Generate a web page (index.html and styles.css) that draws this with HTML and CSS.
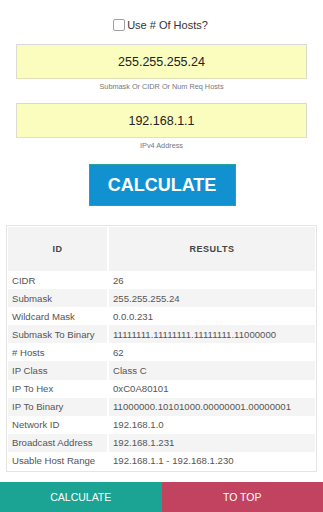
FILE: index.html
```html
<!DOCTYPE html>
<html>
<head>
<meta charset="utf-8">
<link rel="stylesheet" href="styles.css">
</head>
<body>
<div class="page">
  <label class="check-row"><input type="checkbox" class="check"><span>Use # Of Hosts?</span></label>
  <div class="field first">
    <input class="text-in" type="text" value="255.255.255.24">
    <div class="hint">Submask Or CIDR Or Num Req Hosts</div>
  </div>
  <div class="field second">
    <input class="text-in" type="text" value="192.168.1.1">
    <div class="hint">IPv4 Address</div>
  </div>
  <div class="btn-wrap"><button class="calc">CALCULATE</button></div>
  <div class="results">
    <div class="hd">ID</div><div class="hd">RESULTS</div>
    <div class="c">CIDR</div><div class="c">26</div>
    <div class="c s">Submask</div><div class="c s">255.255.255.24</div>
    <div class="c">Wildcard Mask</div><div class="c">0.0.0.231</div>
    <div class="c s">Submask To Binary</div><div class="c s">11111111.11111111.11111111.11000000</div>
    <div class="c"># Hosts</div><div class="c">62</div>
    <div class="c s">IP Class</div><div class="c s">Class C</div>
    <div class="c">IP To Hex</div><div class="c">0xC0A80101</div>
    <div class="c s">IP To Binary</div><div class="c s">11000000.10101000.00000001.00000001</div>
    <div class="c">Network ID</div><div class="c">192.168.1.0</div>
    <div class="c s">Broadcast Address</div><div class="c s">192.168.1.231</div>
    <div class="c">Usable Host Range</div><div class="c">192.168.1.1 - 192.168.1.230</div>
  </div>
  <div class="bar">
    <div class="bar-btn green">CALCULATE</div>
    <div class="bar-btn red">TO TOP</div>
  </div>
</div>
</body>
</html>
```
FILE: styles.css
```css
html, body {
  margin: 0;
  padding: 0;
  background: #fff;
}
body {
  font-family: "Liberation Sans", Arial, sans-serif;
  color: #333;
  width: 323px;
  overflow: hidden;
}
.page {
  display: flex;
  flex-direction: column;
}
.check-row {
  margin-top: 18px;
  height: 14px;
  display: flex;
  align-items: center;
  justify-content: center;
  gap: 2px;
  font-size: 11px;
  color: #333;
  padding-right: 2px;
}
.check {
  appearance: none;
  -webkit-appearance: none;
  margin: 0;
  width: 12px;
  height: 12px;
  border: 1px solid #a0a0a0;
  border-radius: 2px;
  background: #fff;
  box-sizing: border-box;
}
.field {
  margin: 0 16px;
  display: flex;
  flex-direction: column;
}
.first { margin-top: 12px; }
.second { margin-top: 8px; }
.text-in {
  height: 35px;
  box-sizing: border-box;
  width: 100%;
  border: 1px solid #dcdccc;
  border-top-color: #d6d8de;
  border-bottom-color: #e2e2b8;
  background: #fafdbd;
  text-align: center;
  font-family: "Liberation Sans", Arial, sans-serif;
  font-size: 12.5px;
  color: #222;
  padding: 0;
  outline: none;
}
.hint {
  height: 16px;
  line-height: 16px;
  text-align: center;
  font-size: 7.3px;
  color: #777;
}
.btn-wrap {
  margin-top: 10px;
  display: flex;
  justify-content: center;
}
.calc {
  width: 147px;
  height: 42px;
  background: #1291d0;
  border: 1px solid #27a59a;
  color: #fff;
  font-family: "Liberation Sans", Arial, sans-serif;
  font-weight: bold;
  font-size: 18px;
  padding: 0;
  margin-left: 1px;
}
.results {
  margin: 19px 6px 0;
  border: 1px solid #e4e4e4;
  padding: 1px;
  display: grid;
  grid-template-columns: 99px 1fr;
  grid-template-rows: 44px;
  column-gap: 2px;
  grid-auto-rows: 18.1px;
  font-size: 9.6px;
  color: #555;
}
.hd {
  background: #f3f3f3;
  display: flex;
  align-items: center;
  justify-content: center;
  font-weight: bold;
  font-size: 9px;
  letter-spacing: 0.5px;
  color: #444;
}
.c {
  display: flex;
  align-items: center;
  padding-left: 4px;
  white-space: nowrap;
}
.s { background: #f4f4f4; }
.bar {
  margin-top: 10px;
  display: flex;
  height: 30px;
}
.bar-btn {
  flex: 1;
  display: flex;
  align-items: center;
  justify-content: center;
  color: #fff;
  font-size: 10.5px;
}
.green { background: #1ba493; }
.red { background: #c24360; }
```
